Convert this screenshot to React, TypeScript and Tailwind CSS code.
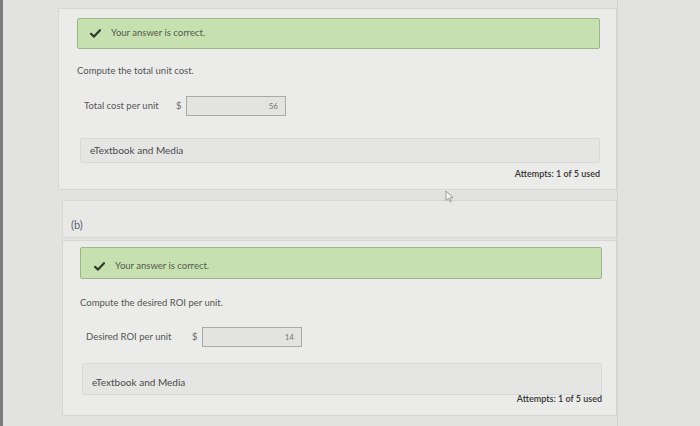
import React from 'react';

const font = { fontFamily: 'Lato, "Open Sans", sans-serif' };

function Check() {
  return (
    <svg width="11" height="9" viewBox="0 0 11 9" className="shrink-0">
      <path d="M1 4.8 L4 7.6 L10 1.2" fill="none" stroke="#2f3a2a" strokeWidth="2.2" strokeLinecap="round" strokeLinejoin="round" />
    </svg>
  );
}

function Correct({ className }: { className: string }) {
  return (
    <div className={`flex items-center h-[31px] bg-[#c7e0af] border border-[#9db58c] rounded-[2px] ${className}`}>
      <Check />
      <span className="text-[9.5px] text-[#545a4f] ml-[10px]">Your answer is correct.</span>
    </div>
  );
}

function AnswerRow({ label, value, labelW, className }: { label: string; value: string; labelW: string; className: string }) {
  return (
    <div className={`flex items-center ${className}`}>
      <span className={`text-[9.5px] text-[#555] ${labelW}`}>{label}</span>
      <span className="text-[9.5px] text-[#666] w-[10px]">$</span>
      <div className="h-[20px] w-[100px] bg-[#e3e4df] border border-[#a9aaa6] flex items-center justify-end pr-[7px]">
        <span className="text-[8px] text-[#777]">{value}</span>
      </div>
    </div>
  );
}

function Media({ className }: { className: string }) {
  return (
    <div className={`flex items-center bg-[#e5e5e4] border border-[#d8d8d6] rounded-[2px] ${className}`}>
      <span className="text-[10px] text-[#4a4a4a]">eTextbook and Media</span>
    </div>
  );
}

export default function App() {
  return (
    <div style={font} className="w-[700px] h-[426px] bg-[#e2e2e1] border-l-[3px] border-[#7b7b7b] overflow-hidden relative">
      <div className="absolute left-[614px] top-0 w-px h-[426px] bg-[#d3d3d2]" />
      <div className="pl-[55px] pt-[8px] w-[614px] flex flex-col">
        {/* part (a) */}
        <div className="h-[182px] bg-[#ebebea] border border-[#d6d6d5] pl-[18px] pr-[16px] pt-[9px] flex flex-col">
          <Correct className="pl-[12px]" />
          <p className="text-[9.5px] text-[#555] mt-[15px] leading-[13px]">Compute the total unit cost.</p>
          <AnswerRow label="Total cost per unit" value="56" labelW="w-[92px]" className="mt-[19px] pl-[7px]" />
          <Media className="mt-[22px] h-[25px] ml-[3px] pl-[9px]" />
          <p className="text-[9px] text-[#333] font-semibold self-end mt-[4px]">Attempts: 1 of 5 used</p>
        </div>

        {/* part (b) header */}
        <div className="mt-[10px] ml-[4px] h-[38px] bg-[#e8e8e7] border border-[#d6d6d5] flex items-end pb-[4px] pl-[8px]">
          <span className="text-[11px] text-[#5a6270]">(b)</span>
        </div>

        {/* part (b) body */}
        <div className="mt-[2px] ml-[4px] h-[176px] bg-[#ebebea] border border-[#d6d6d5] pl-[17px] pr-[14px] pt-[6px] flex flex-col">
          <Correct className="pl-[13px] h-[32px] pt-[7px]" />
          <p className="text-[9.5px] text-[#555] mt-[17px] leading-[13px]">Compute the desired ROI per unit.</p>
          <AnswerRow label="Desired ROI per unit" value="14" labelW="w-[106px]" className="mt-[18px] pl-[6px]" />
          <Media className="mt-[16px] h-[32px] ml-[2px] pl-[9px] pt-[6px]" />
          <p className="text-[9px] text-[#333] font-semibold self-end mt-[-3px]">Attempts: 1 of 5 used</p>
        </div>
      </div>

      {/* mouse pointer */}
      <svg className="absolute left-[442px] top-[190px]" width="9" height="13" viewBox="0 0 9 13">
        <path d="M1 1 L1 10.5 L3.4 8.3 L5 12 L6.4 11.4 L4.9 7.8 L8 7.6 Z" fill="#f4f4f4" stroke="#8a8a8a" strokeWidth="0.8" />
      </svg>
    </div>
  );
}
